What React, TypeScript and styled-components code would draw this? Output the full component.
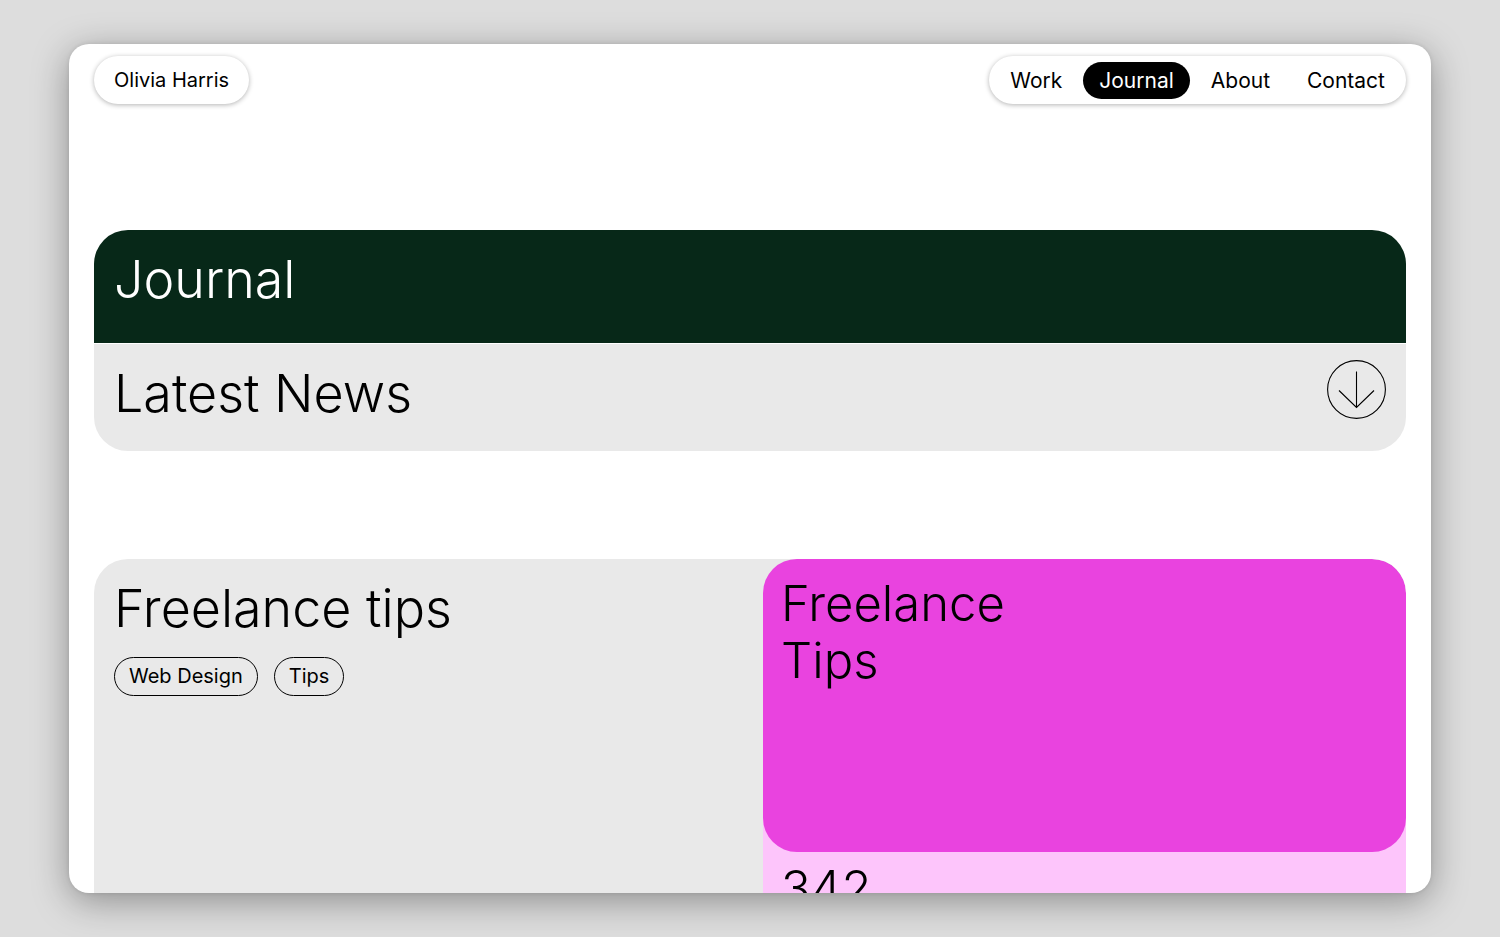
import React from 'react';
import styled, { createGlobalStyle } from 'styled-components';

const colors = {
  backdrop: '#dddddd',
  ink: '#000000',
  paper: '#ffffff',
  forest: '#072818',
  mist: '#e9e9e9',
  magenta: '#e943df',
  pink: '#fdc5fb',
};

const GlobalStyle = createGlobalStyle`
  *, *::before, *::after { box-sizing: border-box; }
  body {
    margin: 0;
    background: ${colors.backdrop};
    color: ${colors.ink};
    font-family: Inter, 'Liberation Sans', sans-serif;
    font-weight: 400;
  }
`;

const Stage = styled.div`
  display: flex;
  height: 100vh;
  padding: 44px 69px;
`;

const Browser = styled.div`
  display: flex;
  flex: 1;
  flex-direction: column;
  min-width: 0;
  overflow: hidden;
  padding: 12px 25px 0;
  border-radius: 20px;
  background: ${colors.paper};
  box-shadow: 0 8px 36px rgba(0, 0, 0, 0.36), 0 0 4px rgba(0, 0, 0, 0.1);
`;

const Header = styled.header`
  display: flex;
  flex: none;
  align-items: center;
  justify-content: space-between;
`;

const Pill = styled.div`
  display: flex;
  align-items: center;
  gap: 5px;
  height: 48px;
  padding: 0 5px;
  border-radius: 24px;
  background: ${colors.paper};
  box-shadow: 0 1px 5px rgba(0, 0, 0, 0.3);
`;

const PillLink = styled.a<{ $active?: boolean }>`
  padding: 0 16px;
  border-radius: 19px;
  background: ${(p) => (p.$active ? colors.ink : 'transparent')};
  color: ${(p) => (p.$active ? colors.paper : colors.ink)};
  font-size: 21px;
  line-height: 37px;
  text-decoration: none;
  white-space: nowrap;
`;

const HomeLink = styled(PillLink)`
  padding: 0 15px;
  font-size: 20px;
`;

const Main = styled.main`
  display: flex;
  flex: none;
  flex-direction: column;
  gap: 108px;
  padding-top: 126px;
`;

const Panel = styled.section`
  display: flex;
  flex-direction: column;
  gap: 1px;
  overflow: hidden;
  border-radius: 34px;
`;

const Band = styled.div<{ $dark?: boolean }>`
  display: flex;
  align-items: flex-start;
  justify-content: space-between;
  padding: 16px 20px ${(p) => (p.$dark ? 30 : 24)}px;
  background: ${(p) => (p.$dark ? colors.forest : colors.mist)};
  color: ${(p) => (p.$dark ? colors.paper : colors.ink)};
`;

const titleStyles = `
  margin: 0;
  font-size: 52px;
  font-weight: 300;
  line-height: 67px;
`;

const PageTitle = styled.h1`${titleStyles}`;
const SectionTitle = styled.h2`${titleStyles}`;

const RoundButton = styled.button`
  display: flex;
  flex: none;
  padding: 0;
  border: 0;
  background: none;
  color: inherit;
  cursor: pointer;
`;

const Article = styled.article`
  display: grid;
  grid-template-columns: 51fr 49fr;
  min-height: 520px;
  overflow: hidden;
  border-radius: 34px;
  background: ${colors.mist};
`;

const Summary = styled.div`
  display: flex;
  flex-direction: column;
  gap: 15px;
  padding: 16px 20px;
`;

const TagList = styled.ul`
  display: flex;
  gap: 16px;
  margin: 0;
  padding: 0;
  list-style: none;
`;

const Tag = styled.li`
  padding: 0 14px;
  border: 1px solid ${colors.ink};
  border-radius: 20px;
  font-size: 20px;
  line-height: 37px;
`;

const Poster = styled.div`
  display: flex;
  flex-direction: column;
  background: linear-gradient(${colors.mist} 100px, ${colors.pink} 100px);
`;

const PosterCover = styled.div`
  min-height: 293px;
  padding: 16px 18px;
  border-radius: 34px;
  background: ${colors.magenta};
`;

const PosterText = styled.p`
  margin: 0;
  font-size: 49px;
  font-weight: 300;
  line-height: 57px;
`;

const PosterFooter = styled.div`
  padding: 8px 18px;
`;

const navItems = ['Work', 'Journal', 'About', 'Contact'];
const tags = ['Web Design', 'Tips'];

const ArrowDown = () => (
  <svg width="59" height="59" viewBox="0 0 59 59" fill="none" stroke="currentColor" strokeWidth="1.1" aria-hidden="true">
    <circle cx="29.500" cy="29.500" r="28.900" />
    <path d="M29.500 11.500V47.500M12 30.500L29.500 47.500L47 30.500" />
  </svg>
);

export default function App() {
  return (
    <>
      <GlobalStyle />
      <Stage>
        <Browser>
          <Header>
            <Pill>
              <HomeLink href="#home">Olivia Harris</HomeLink>
            </Pill>
            <Pill as="nav">
              {navItems.map((item) => (
                <PillLink key={item} href={`#${item.toLowerCase()}`} $active={item === 'Journal'}>
                  {item}
                </PillLink>
              ))}
            </Pill>
          </Header>
          <Main>
            <Panel>
              <Band $dark>
                <PageTitle>Journal</PageTitle>
              </Band>
              <Band>
                <SectionTitle>Latest News</SectionTitle>
                <RoundButton type="button" aria-label="Scroll to latest news">
                  <ArrowDown />
                </RoundButton>
              </Band>
            </Panel>
            <Article>
              <Summary>
                <SectionTitle>Freelance tips</SectionTitle>
                <TagList>
                  {tags.map((tag) => (
                    <Tag key={tag}>{tag}</Tag>
                  ))}
                </TagList>
              </Summary>
              <Poster>
                <PosterCover>
                  <PosterText>
                    Freelance
                    <br />
                    Tips
                  </PosterText>
                </PosterCover>
                <PosterFooter>
                  <PosterText>342</PosterText>
                </PosterFooter>
              </Poster>
            </Article>
          </Main>
        </Browser>
      </Stage>
    </>
  );
}
